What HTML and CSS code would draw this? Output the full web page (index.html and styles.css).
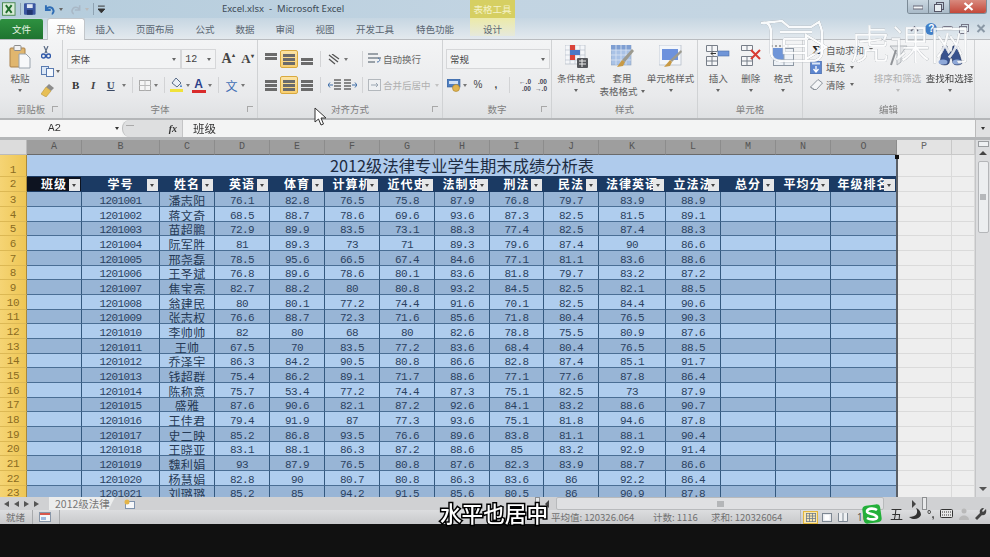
FILE: index.html
```html
<!DOCTYPE html>
<html lang="zh-CN">
<head>
    <meta charset="UTF-8">
    <title>Excel.xlsx - Microsoft Excel</title>
    <link rel="stylesheet" href="styles.css">
</head>
<body>

<div class="app">

    <!-- Title bar -->
    <div class="titlebar">
        <div class="qat">
            <svg width="14" height="14" viewBox="0 0 14 14"><rect x="0.5" y="0.5" width="13" height="13" fill="#d8ecd8" stroke="#4d8a55"/><path d="M4 3l6 8M10 3l-6 8" stroke="#1f6e2c" stroke-width="2"/></svg>
            <span class="qat-sep"></span>
            <svg width="12" height="12" viewBox="0 0 12 12"><rect width="12" height="12" rx="1" fill="#3a55a0"/><rect x="3" y="1" width="6" height="4" fill="#dfe6f5"/><rect x="3" y="7" width="6" height="5" fill="#223570"/></svg>
            <svg class="qat-gap" width="11" height="11" viewBox="0 0 11 11"><path d="M2 1v5h5M2 6c2-4 7-4 8 1 0 1-1 3-2 3" fill="none" stroke="#2f6db5" stroke-width="2"/></svg>
            <i class="mini-arrow"></i>
            <svg class="qat-gap" width="11" height="11" viewBox="0 0 11 11"><path d="M9 1v5H4M9 6C7 2 2 2 1 7c0 1 1 3 2 3" fill="none" stroke="#a9b8c6" stroke-width="1.6"/></svg>
            <i class="mini-arrow faded"></i>
            <span class="qat-sep"></span>
            <svg width="7" height="8" viewBox="0 0 7 8"><path d="M0 1h7M0 4h7l-3.5 4z" stroke="#333" fill="#333"/></svg>
        </div>
        <div class="doc-title">Excel.xlsx&nbsp; -&nbsp; Microsoft Excel</div>
        <div class="ctx-title">表格工具</div>
        <div class="win-btns">
            <span class="win-btn"><svg width="10" height="6" viewBox="0 0 10 6"><rect y="2" width="10" height="3" fill="#f3f6f8" stroke="#667"/></svg></span>
            <span class="win-btn"><svg width="10" height="10" viewBox="0 0 10 10"><rect x="2.5" y="0.5" width="7" height="7" fill="none" stroke="#556"/><rect x="0.5" y="2.5" width="7" height="7" fill="#e8eef2" stroke="#556"/></svg></span>
            <span class="win-btn close"><svg width="11" height="9" viewBox="0 0 11 9"><path d="M1.5 1l8 7M9.5 1l-8 7" stroke="#fff" stroke-width="2.2"/></svg></span>
        </div>
    </div>

    <!-- Ribbon tabs -->
    <div class="tabs">
        <div class="tab-file">文件</div>
        <div class="tab active">开始</div>
        <div class="tab">插入</div>
        <div class="tab wide">页面布局</div>
        <div class="tab">公式</div>
        <div class="tab">数据</div>
        <div class="tab">审阅</div>
        <div class="tab">视图</div>
        <div class="tab wide">开发工具</div>
        <div class="tab wide">特色功能</div>
        <div class="tab ctx">设计</div>
        <div class="tab-tools">
            <span class="tab-tool"><svg width="9" height="6" viewBox="0 0 9 6"><path d="M1 5l3.5-4L8 5" fill="none" stroke="#667" stroke-width="1.6"/></svg></span>
            <span class="tab-tool"><span class="help">?</span></span>
            <span class="tab-tool"><svg width="11" height="5" viewBox="0 0 11 5"><rect x="0.5" y="0.5" width="10" height="3" rx="1" fill="#f4f6f8" stroke="#778"/></svg></span>
            <span class="tab-tool"><svg width="10" height="10" viewBox="0 0 10 10"><rect x="2.5" y="0.5" width="7" height="7" fill="none" stroke="#778"/><rect x="0.5" y="2.5" width="7" height="7" fill="#e8eef2" stroke="#778"/></svg></span>
            <span class="tab-tool"><svg width="10" height="9" viewBox="0 0 10 9"><path d="M1.5 1l7 7M8.5 1l-7 7" stroke="#8a98a6" stroke-width="2"/></svg></span>
        </div>
    </div>

    <!-- Ribbon -->
    <div class="ribbon">

        <div class="group g-clip">
            <div class="group-body">
                <div class="big-btn paste">
                    <div class="big-icon">
                        <svg width="22" height="24" viewBox="0 0 22 24"><rect x="1" y="3" width="15" height="19" rx="1" fill="#e0b66e" stroke="#a9814a"/><rect x="5" y="0.5" width="7" height="5" rx="1" fill="#f1f1f1" stroke="#8d8d8d"/><path d="M10 9h7l4 4v10H10z" fill="#f7f8fa" stroke="#9aa4ae"/></svg>
                    </div>
                    <div class="big-text">粘贴</div>
                    <i class="mini-arrow"></i>
                </div>
                <div class="clip-tools">
                    <svg width="10" height="13" viewBox="0 0 10 13"><path d="M3 0l3 7M7 0L4 7" stroke="#5a6b85" stroke-width="1.2"/><circle cx="2.5" cy="10" r="2" fill="none" stroke="#2f58a8" stroke-width="1.4"/><circle cx="7.5" cy="10" r="2" fill="none" stroke="#2f58a8" stroke-width="1.4"/></svg>
                    <span class="clip-row"><svg width="13" height="11" viewBox="0 0 13 11"><rect x="0.5" y="0.5" width="7" height="8" fill="#dbe7f6" stroke="#5a7bb0"/><rect x="5.5" y="2.5" width="7" height="8" fill="#f4f8fd" stroke="#5a7bb0"/></svg><i class="mini-arrow"></i></span>
                    <svg width="13" height="13" viewBox="0 0 13 13"><path d="M8 0l5 4-3 3-5-4z" fill="#8c8c8c"/><path d="M5 3l5 4-5 6-5-3z" fill="#e7bf55" stroke="#b08a2f" stroke-width="0.5"/></svg>
                </div>
            </div>
            <div class="group-label"><span></span><span>剪贴板</span><i class="launcher"></i></div>
        </div>

        <div class="group g-font">
            <div class="group-body column">
                <div class="tool-row">
                    <div class="select font-name"><span>宋体</span><i class="mini-arrow"></i></div>
                    <div class="select font-size"><span>12</span><i class="mini-arrow"></i></div>
                    <span class="grow-a big">A<sup>▴</sup></span>
                    <span class="grow-a">A<sup>▾</sup></span>
                </div>
                <div class="tool-row second">
                    <span class="tool fmt bold">B</span>
                    <span class="tool fmt italic">I</span>
                    <span class="tool fmt under">U</span>
                    <i class="drop"></i>
                    <span class="sep"></span>
                    <span class="tool narrow"><svg width="12" height="11" viewBox="0 0 12 11"><rect x="0.5" y="0.5" width="11" height="10" fill="#f5f5f5" stroke="#aaa"/><path d="M6 0v11M0 5.5h12" stroke="#bbb"/></svg></span>
                    <i class="drop"></i>
                    <span class="sep"></span>
                    <span class="tool narrow"><svg width="13" height="14" viewBox="0 0 13 14"><path d="M6 0l5 5-4 4-5-4z" fill="#e9eef5" stroke="#5a6c88"/><path d="M11 6l1 3h-2z" fill="#3f78c2"/><rect y="11" width="13" height="3" fill="#f0e23a"/></svg></span>
                    <i class="drop"></i>
                    <span class="tool narrow font-color">A</span>
                    <i class="drop"></i>
                    <span class="sep"></span>
                    <span class="tool narrow wen">文</span>
                    <i class="drop"></i>
                </div>
            </div>
            <div class="group-label"><span></span><span>字体</span><i class="launcher"></i></div>
        </div>

        <div class="group g-align">
            <div class="group-body column">
                <div class="tool-row">
                    <span class="tool al"><span class="bars up"><b></b><b></b></span></span>
                    <span class="tool al on"><span class="bars"><b></b><b></b><b></b></span></span>
                    <span class="tool al"><span class="bars down"><b></b><b></b></span></span>
                    <span class="sep"></span>
                    <span class="tool orient"><svg width="12" height="11" viewBox="0 0 12 11"><path d="M1 1l9 7M1 5l6 5M4 0l7 5" stroke="#555" stroke-width="1.3"/></svg></span>
                    <i class="drop"></i>
                    <span class="sep far"></span>
                    <span class="tool-text"><svg width="13" height="12" viewBox="0 0 13 12"><path d="M0 1h10M0 5h13M0 9h7" stroke="#7d8790" stroke-width="1.6"/><path d="M10 5c3 1 2 4-1 4" fill="none" stroke="#4b74aa"/></svg>自动换行</span>
                </div>
                <div class="tool-row second">
                    <span class="tool al"><span class="bars"><b></b><b></b><b></b></span></span>
                    <span class="tool al on"><span class="bars"><b></b><b></b><b></b></span></span>
                    <span class="tool al"><span class="bars"><b></b><b></b><b></b></span></span>
                    <span class="sep"></span>
                    <span class="tool indent"><svg width="13" height="12" viewBox="0 0 13 12"><path d="M6 1h7M6 4h7M6 7h7M6 10h7" stroke="#666" stroke-width="1.3"/><path d="M5 6H0M2 3.5L0 6l2 2.5" fill="none" stroke="#3f6ea8"/></svg></span>
                    <span class="tool indent"><svg width="13" height="12" viewBox="0 0 13 12"><path d="M0 1h7M0 4h7M0 7h7M0 10h7" stroke="#666" stroke-width="1.3"/><path d="M8 6h5M11 3.5L13 6l-2 2.5" fill="none" stroke="#3f6ea8"/></svg></span>
                    <span class="sep merge-sep"></span>
                    <span class="tool-text faded"><svg width="13" height="12" viewBox="0 0 13 12"><rect x="0.5" y="0.5" width="12" height="11" fill="#eef0f2" stroke="#b3b8bd"/><path d="M3 6h7M8 4l2 2-2 2" fill="none" stroke="#9aa6b2"/></svg>合并后居中</span>
                    <i class="drop faint"></i>
                </div>
            </div>
            <div class="group-label"><span></span><span>对齐方式</span><i class="launcher"></i></div>
        </div>

        <div class="group g-num">
            <div class="group-body column">
                <div class="tool-row">
                    <div class="select num-format"><span>常规</span><i class="mini-arrow"></i></div>
                </div>
                <div class="tool-row second">
                    <span class="tool narrow"><svg width="14" height="13" viewBox="0 0 14 13"><rect width="13" height="8" fill="#4f7fc0" stroke="#34588f" stroke-width="0.6"/><rect x="2" y="2" width="9" height="3" fill="#cfe0f5"/><circle cx="9" cy="9" r="3.5" fill="#e0b44e" stroke="#a87f2a" stroke-width="0.6"/></svg></span>
                    <i class="drop"></i>
                    <span class="tool num-sym">%</span>
                    <span class="tool num-sym comma">,</span>
                    <span class="sep"></span>
                    <span class="tool dec"><span>←.0</span><span>.00</span></span>
                    <span class="tool dec"><span>.00</span><span>→.0</span></span>
                </div>
            </div>
            <div class="group-label"><span></span><span>数字</span><i class="launcher"></i></div>
        </div>

        <div class="group g-style">
            <div class="group-body">
                <div class="big-btn cond">
                    <div class="big-icon">
                        <svg width="23" height="23" viewBox="0 0 23 23"><rect width="20" height="19" fill="#f4f6f9" stroke="#a9b2bd" stroke-width="0.6"/><path d="M5 0v19M10 0v19M15 0v19M0 5h20M0 10h20M0 15h20" stroke="#b9c2cd" stroke-width="0.7"/><rect x="5" width="5" height="5" fill="#d9433a"/><rect x="5" y="5" width="10" height="5" fill="#4a78c8"/><rect x="5" y="10" width="5" height="5" fill="#d9433a"/><rect x="12" y="13" width="11" height="10" rx="1" fill="#56585c"/><path d="M14 16h7M14 19h7M17 14v8" stroke="#eee"/></svg>
                    </div>
                    <div class="big-text">条件格式</div>
                    <i class="mini-arrow"></i>
                </div>
                <div class="big-btn table-fmt">
                    <div class="big-icon">
                        <svg width="23" height="23" viewBox="0 0 23 23"><rect width="20" height="20" fill="#a9c2e6" stroke="#8ea2bd" stroke-width="0.6"/><rect width="20" height="5" fill="#7f9fd2"/><path d="M5 0v20M10 0v20M15 0v20M0 5h20M0 10h20M0 15h20" stroke="#dbe5f3" stroke-width="0.8"/><path d="M21 4l2 2-9 11-3-2z" fill="#9c9a8f"/><path d="M11 15l3 2-2 4-6 1z" fill="#c89a45"/></svg>
                    </div>
                    <div class="big-text">套用<br>表格格式<i class="mini-arrow inline"></i></div>
                </div>
                <div class="big-btn cell-style">
                    <div class="big-icon">
                        <svg width="23" height="23" viewBox="0 0 23 23"><rect width="22" height="20" fill="#f3f6fa" stroke="#a4afbc" stroke-width="0.6"/><rect x="3" y="4" width="16" height="11" fill="#6d92dd"/><path d="M22 5l1 2-10 10-2-2z" fill="#9c9a8f"/><path d="M11 15l2 2-2 4-6 1z" fill="#c89a45"/></svg>
                    </div>
                    <div class="big-text">单元格样式</div>
                    <i class="mini-arrow"></i>
                </div>
            </div>
            <div class="group-label"><span></span><span>样式</span><span></span></div>
        </div>

        <div class="group g-cell">
            <div class="group-body">
                <div class="big-btn cell-btn">
                    <div class="big-icon">
                        <svg width="24" height="21" viewBox="0 0 24 21"><path d="M0.5 0.5h11v6h-11zM6 0.5v6M0.5 11.5h11v9h-11zM6 11.5v9M0.5 16h11" fill="#f5f6f8" stroke="#777e88"/><rect x="12" y="6" width="11" height="5" fill="#6f95d8" stroke="#4a6ea8" stroke-width="0.6"/><path d="M10 8.5H5M7 6.5l-2 2 2 2" fill="none" stroke="#333"/></svg>
                    </div>
                    <div class="big-text">插入</div>
                    <i class="mini-arrow"></i>
                </div>
                <div class="big-btn cell-btn">
                    <div class="big-icon">
                        <svg width="20" height="21" viewBox="0 0 20 21"><path d="M0.5 0.5h11v5h-11zM6 0.5v5M0.5 11.5h11v9h-11zM6 11.5v9M0.5 16h11" fill="#f5f6f8" stroke="#777e88"/><path d="M10 5l9 9M19 5l-9 9" stroke="#d93a32" stroke-width="2"/></svg>
                    </div>
                    <div class="big-text">删除</div>
                    <i class="mini-arrow"></i>
                </div>
                <div class="big-btn cell-btn">
                    <div class="big-icon">
                        <svg width="24" height="21" viewBox="0 0 24 21"><rect x="2.5" y="3.5" width="20" height="17" fill="#eef2f7" stroke="#8d97a3"/><rect x="2" y="3" width="11" height="12" fill="#6f95d8"/><path d="M13 3v17M2 15h20" stroke="#9aa5b2"/><path d="M0 1h20" stroke="#555" stroke-dasharray="2 2"/></svg>
                    </div>
                    <div class="big-text">格式</div>
                    <i class="mini-arrow"></i>
                </div>
            </div>
            <div class="group-label"><span></span><span>单元格</span><span></span></div>
        </div>

        <div class="group g-edit">
            <div class="group-body">
                <div class="edit-list">
                    <div class="edit-row"><span class="sigma">Σ</span>自动求和<i class="mini-arrow"></i></div>
                    <div class="edit-row"><svg width="12" height="13" viewBox="0 0 12 13"><rect width="11" height="13" fill="#5d86cf" stroke="#3c5f9e" stroke-width="0.6"/><rect x="1.5" y="1.5" width="8" height="2" fill="#dbe6f6"/><path d="M5.5 5v5M3 8l2.5 3L8 8" fill="none" stroke="#fff" stroke-width="1.3"/></svg>填充<i class="mini-arrow"></i></div>
                    <div class="edit-row"><svg width="13" height="11" viewBox="0 0 13 11"><path d="M8 0.5l4.5 3.5-6 6.5H3L0.5 8z" fill="#f3f5f7" stroke="#8d949c"/><path d="M0.5 8l4 2.5" stroke="#8d949c"/></svg>清除<i class="mini-arrow"></i></div>
                </div>
                <div class="big-btn sort">
                    <div class="big-icon">
                        <svg width="22" height="21" viewBox="0 0 22 21"><path d="M3 1h17l-6 8v8l-4 3v-11z" fill="#e4e6e8" stroke="#b0b4b9"/><path d="M4 20L9 5" stroke="#8f9296" stroke-width="2"/></svg>
                    </div>
                    <div class="big-text">排序和筛选</div>
                    <i class="mini-arrow faded"></i>
                </div>
                <div class="big-btn find">
                    <div class="big-icon">
                        <svg width="26" height="21" viewBox="0 0 26 21"><path d="M6 1h4l1 6h4l1-6h4l5 17c0 2-8 3-9 0l-1-5h-2l-1 5c-1 3-9 2-9 0z" fill="#38528d" stroke="#1f2f58" stroke-width="0.6"/><ellipse cx="6" cy="17" rx="4.5" ry="2.5" fill="#8ea8d8"/><ellipse cx="20" cy="17" rx="4.5" ry="2.5" fill="#8ea8d8"/><path d="M7 2h2M17 2h2" stroke="#c6d3ea"/></svg>
                    </div>
                    <div class="big-text dark">查找和选择</div>
                    <i class="mini-arrow"></i>
                </div>
            </div>
            <div class="group-label"><span></span><span>编辑</span><span></span></div>
        </div>
    </div>

    <!-- Formula bar -->
    <div class="formula-wrap">
        <div class="formula-bar">
            <div class="name-box"><span>A2</span><i class="mini-arrow dark"></i></div>
            <div class="fx-box"><span class="fx-knob"></span><span class="fx">fx</span></div>
            <div class="formula-input">班级</div>
            <div class="formula-expand"><i class="mini-arrow dark"></i></div>
        </div>
    </div>

    <!-- Sheet -->
    <div class="sheet-row">
        <div class="sheet">
            <table class="grid">
                <colgroup>
                    <col class="c-head"><col class="c55"><col class="c78"><col class="c55"><col class="c55"><col class="c55"><col class="c55"><col class="c55"><col class="c55"><col class="c54"><col class="c55"><col class="c67"><col class="c55"><col class="c55"><col class="c55"><col class="c66"><col class="c55"><col class="c23">
                </colgroup>
                <thead>
                    <tr><th class="corner"></th><th>A</th><th>B</th><th>C</th><th>D</th><th>E</th><th>F</th><th>G</th><th>H</th><th>I</th><th>J</th><th>K</th><th>L</th><th>M</th><th>N</th><th>O</th><th class="off">P</th><th class="off"></th></tr>
                </thead>
                <tbody>
                    <tr class="title-row"><th>1</th><td colspan="15" class="sheet-title">2012级法律专业学生期末成绩分析表</td><td></td><td></td></tr>
                    <tr class="head-row"><th>2</th>
                        <td class="hd active-cell"><span>班级</span><i class="filter"></i></td>
                        <td class="hd"><span>学号</span><i class="filter"></i></td>
                        <td class="hd"><span>姓名</span><i class="filter"></i></td>
                        <td class="hd"><span>英语</span><i class="filter"></i></td>
                        <td class="hd"><span>体育</span><i class="filter"></i></td>
                        <td class="hd"><span>计算机</span><i class="filter"></i></td>
                        <td class="hd"><span>近代史</span><i class="filter"></i></td>
                        <td class="hd"><span>法制史</span><i class="filter"></i></td>
                        <td class="hd"><span>刑法</span><i class="filter"></i></td>
                        <td class="hd"><span>民法</span><i class="filter"></i></td>
                        <td class="hd"><span>法律英语</span><i class="filter"></i></td>
                        <td class="hd"><span>立法法</span><i class="filter"></i></td>
                        <td class="hd"><span>总分</span><i class="filter"></i></td>
                        <td class="hd"><span>平均分</span><i class="filter"></i></td>
                        <td class="hd"><span>年级排名</span><i class="filter"></i></td>
                        <td></td><td></td>
                    </tr>
                    <tr><th>3</th><td></td><td>1201001</td><td>潘志阳</td><td>76.1</td><td>82.8</td><td>76.5</td><td>75.8</td><td>87.9</td><td>76.8</td><td>79.7</td><td>83.9</td><td>88.9</td><td></td><td></td><td></td><td></td><td></td></tr>
                    <tr><th>4</th><td></td><td>1201002</td><td>蒋文奇</td><td>68.5</td><td>88.7</td><td>78.6</td><td>69.6</td><td>93.6</td><td>87.3</td><td>82.5</td><td>81.5</td><td>89.1</td><td></td><td></td><td></td><td></td><td></td></tr>
                    <tr><th>5</th><td></td><td>1201003</td><td>苗超鹏</td><td>72.9</td><td>89.9</td><td>83.5</td><td>73.1</td><td>88.3</td><td>77.4</td><td>82.5</td><td>87.4</td><td>88.3</td><td></td><td></td><td></td><td></td><td></td></tr>
                    <tr><th>6</th><td></td><td>1201004</td><td>阮军胜</td><td>81</td><td>89.3</td><td>73</td><td>71</td><td>89.3</td><td>79.6</td><td>87.4</td><td>90</td><td>86.6</td><td></td><td></td><td></td><td></td><td></td></tr>
                    <tr><th>7</th><td></td><td>1201005</td><td>邢尧磊</td><td>78.5</td><td>95.6</td><td>66.5</td><td>67.4</td><td>84.6</td><td>77.1</td><td>81.1</td><td>83.6</td><td>88.6</td><td></td><td></td><td></td><td></td><td></td></tr>
                    <tr><th>8</th><td></td><td>1201006</td><td>王圣斌</td><td>76.8</td><td>89.6</td><td>78.6</td><td>80.1</td><td>83.6</td><td>81.8</td><td>79.7</td><td>83.2</td><td>87.2</td><td></td><td></td><td></td><td></td><td></td></tr>
                    <tr><th>9</th><td></td><td>1201007</td><td>焦宝亮</td><td>82.7</td><td>88.2</td><td>80</td><td>80.8</td><td>93.2</td><td>84.5</td><td>82.5</td><td>82.1</td><td>88.5</td><td></td><td></td><td></td><td></td><td></td></tr>
                    <tr><th>10</th><td></td><td>1201008</td><td>翁建民</td><td>80</td><td>80.1</td><td>77.2</td><td>74.4</td><td>91.6</td><td>70.1</td><td>82.5</td><td>84.4</td><td>90.6</td><td></td><td></td><td></td><td></td><td></td></tr>
                    <tr><th>11</th><td></td><td>1201009</td><td>张志权</td><td>76.6</td><td>88.7</td><td>72.3</td><td>71.6</td><td>85.6</td><td>71.8</td><td>80.4</td><td>76.5</td><td>90.3</td><td></td><td></td><td></td><td></td><td></td></tr>
                    <tr><th>12</th><td></td><td>1201010</td><td>李帅帅</td><td>82</td><td>80</td><td>68</td><td>80</td><td>82.6</td><td>78.8</td><td>75.5</td><td>80.9</td><td>87.6</td><td></td><td></td><td></td><td></td><td></td></tr>
                    <tr><th>13</th><td></td><td>1201011</td><td>王帅</td><td>67.5</td><td>70</td><td>83.5</td><td>77.2</td><td>83.6</td><td>68.4</td><td>80.4</td><td>76.5</td><td>88.5</td><td></td><td></td><td></td><td></td><td></td></tr>
                    <tr><th>14</th><td></td><td>1201012</td><td>乔泽宇</td><td>86.3</td><td>84.2</td><td>90.5</td><td>80.8</td><td>86.6</td><td>82.8</td><td>87.4</td><td>85.1</td><td>91.7</td><td></td><td></td><td></td><td></td><td></td></tr>
                    <tr><th>15</th><td></td><td>1201013</td><td>钱超群</td><td>75.4</td><td>86.2</td><td>89.1</td><td>71.7</td><td>88.6</td><td>77.1</td><td>77.6</td><td>87.8</td><td>86.4</td><td></td><td></td><td></td><td></td><td></td></tr>
                    <tr><th>16</th><td></td><td>1201014</td><td>陈称意</td><td>75.7</td><td>53.4</td><td>77.2</td><td>74.4</td><td>87.3</td><td>75.1</td><td>82.5</td><td>73</td><td>87.9</td><td></td><td></td><td></td><td></td><td></td></tr>
                    <tr><th>17</th><td></td><td>1201015</td><td>盛雅</td><td>87.6</td><td>90.6</td><td>82.1</td><td>87.2</td><td>92.6</td><td>84.1</td><td>83.2</td><td>88.6</td><td>90.7</td><td></td><td></td><td></td><td></td><td></td></tr>
                    <tr><th>18</th><td></td><td>1201016</td><td>王佳君</td><td>79.4</td><td>91.9</td><td>87</td><td>77.3</td><td>93.6</td><td>75.1</td><td>81.8</td><td>94.6</td><td>87.8</td><td></td><td></td><td></td><td></td><td></td></tr>
                    <tr><th>19</th><td></td><td>1201017</td><td>史二映</td><td>85.2</td><td>86.8</td><td>93.5</td><td>76.6</td><td>89.6</td><td>83.8</td><td>81.1</td><td>88.1</td><td>90.4</td><td></td><td></td><td></td><td></td><td></td></tr>
                    <tr><th>20</th><td></td><td>1201018</td><td>王晓亚</td><td>83.1</td><td>88.1</td><td>86.3</td><td>87.2</td><td>88.6</td><td>85</td><td>83.2</td><td>92.9</td><td>91.4</td><td></td><td></td><td></td><td></td><td></td></tr>
                    <tr><th>21</th><td></td><td>1201019</td><td>魏利娟</td><td>93</td><td>87.9</td><td>76.5</td><td>80.8</td><td>87.6</td><td>82.3</td><td>83.9</td><td>88.7</td><td>86.6</td><td></td><td></td><td></td><td></td><td></td></tr>
                    <tr><th>22</th><td></td><td>1201020</td><td>杨慧娟</td><td>82.8</td><td>90</td><td>80.7</td><td>80.8</td><td>86.3</td><td>83.6</td><td>86</td><td>92.2</td><td>86.4</td><td></td><td></td><td></td><td></td><td></td></tr>
                    <tr><th>23</th><td></td><td>1201021</td><td>刘璐璐</td><td>85.2</td><td>85</td><td>94.2</td><td>91.5</td><td>85.6</td><td>80.5</td><td>86</td><td>90.9</td><td>87.8</td><td></td><td></td><td></td><td></td><td></td></tr>
                </tbody>
            </table>
            <!-- Selection edge, sits over the grid -->
            <div class="selection-edge"><i></i></div>
        </div>
        <div class="vscroll">
            <div class="split-box"></div>
            <div class="arrow-up"></div>
            <div class="vthumb"><i></i></div>
            <div class="scroll-space"></div>
            <div class="arrow-down"></div>
        </div>
    </div>

    <!-- Sheet tabs and horizontal scrollbar -->
    <div class="sheet-tabs">
        <div class="tab-nav">
            <i class="nav first"></i><i class="nav prev"></i><i class="nav next"></i><i class="nav last"></i>
        </div>
        <div class="sheet-tab">2012级法律</div>
        <div class="new-tab"><svg width="12" height="10" viewBox="0 0 12 10"><rect x="1.5" y="2.5" width="9" height="7" fill="#f7f8fa" stroke="#7f93ad"/><circle cx="3" cy="3" r="2.5" fill="#e3b448"/></svg></div>
        <div class="tabs-space"></div>
        <div class="hsplit"></div>
        <div class="harrow left"></div>
        <div class="hthumb"><i></i></div>
        <div class="hrest"><span class="harrow right"></span><span class="hsplit end"></span></div>
    </div>

    <!-- Status bar -->
    <div class="statusbar">
        <div class="status-ready">就绪</div>
        <div class="status-macro"><svg width="12" height="10" viewBox="0 0 12 10"><rect x="0.5" y="0.5" width="11" height="9" fill="#f4f6f8" stroke="#8896a8"/><rect x="1" y="1" width="10" height="2" fill="#d8574c"/><rect x="2" y="5" width="5" height="3" fill="#9db9df"/></svg></div>
        <div class="status-space"></div>
        <div class="stat stat-avg">平均值: 120326.064</div>
        <div class="stat stat-count">计数: 1116</div>
        <div class="stat stat-sum">求和: 120326064</div>
        <div class="views">
            <span class="view on"><svg width="10" height="9" viewBox="0 0 10 9"><path d="M0 .5h10M0 3h10M0 5.5h10M0 8.5h10M.5 0v9M3.5 0v9M6.5 0v9M9.5 0v9" stroke="#6d7b8c" stroke-width="0.8"/></svg></span>
            <span class="view"><svg width="10" height="9" viewBox="0 0 10 9"><rect x="0.5" y="0.5" width="9" height="8" fill="#e9ebee" stroke="#7d8792"/><rect x="2.5" y="2" width="5" height="5" fill="#fff"/></svg></span>
            <span class="view"><svg width="10" height="9" viewBox="0 0 10 9"><path d="M.5 0v8.5h9V0M5 0v8.5" fill="#eef0f2" stroke="#7d8792"/></svg></span>
            <span class="zoom-val">10</span>
        </div>
    </div>

    <div class="black-band"></div>

    <!-- Overlays: watermark, cursor, subtitle, input method -->
    <div class="watermark">
        <svg width="72" height="46" viewBox="0 0 72 46" fill="none" stroke="#fff" stroke-width="2.6"><path d="M1 4c7-2 10 3 10 9v20c0 6 5 9 11 9h30c6 0 10-4 10-9V14c0-5-2-8-3-11l-8 5H29l-7-6z"/><path d="M20 13h32M24 20h24M24 27h22M24 20v14h22"/><path d="M46 16l20 12-20 12z"/></svg>
        <span class="wm-text">虎课网</span>
    </div>
    <svg class="cursor" width="13" height="19" viewBox="0 0 13 19"><path d="M1 1v14l3.5-3 2.5 6 2.5-1-2.5-6h5z" fill="#fff" stroke="#333"/></svg>
    <div class="subtitle">水平也居中</div>
    <div class="ime">
        <svg class="ime-logo" width="20" height="20" viewBox="0 0 20 20"><rect x="1" y="1" width="18" height="18" rx="4" fill="#23b03a" transform="rotate(-8 10 10)"/><path d="M15 6c-3-2-9-2-10 1s9 3 10 6-7 3-10 1" fill="none" stroke="#fff" stroke-width="2.6"/></svg>
        <span class="ime-wu">五</span>
        <svg width="12" height="12" viewBox="0 0 12 12"><path d="M7 0c3 5 0 9-7 9 3 3 10 3 12-2C12 4 10 1 7 0z" fill="#333"/></svg>
        <span class="ime-dot">°,</span>
        <svg width="13" height="9" viewBox="0 0 13 9"><rect x="0.5" y="0.5" width="12" height="8" rx="1" fill="#e8e8e8" stroke="#333"/><path d="M2 3h9M2 6h9" stroke="#333" stroke-dasharray="1 1"/></svg>
        <svg width="10" height="12" viewBox="0 0 10 12"><circle cx="5" cy="3" r="2.5" fill="#b9b9b9"/><path d="M0 12c0-6 10-6 10 0z" fill="#b9b9b9"/></svg>
        <svg width="12" height="12" viewBox="0 0 12 12"><path d="M11 1L8 4 7 3l2-3C6 0 4 2 5 5L0 10l2 2 5-5c3 1 5-2 4-6z" fill="#444"/></svg>
    </div>
</div>

</body>
</html>
```

FILE: styles.css
```css
* {
    box-sizing: border-box;
}

body {
    margin: 0;
    background: #111;
    font-family: "Noto Sans CJK SC", "Noto Sans", sans-serif;
    font-size: 9.5px;
    color: #666;
}

.app {
    position: relative;
    width: 990px;
    height: 557px;
    overflow: hidden;
    display: flex;
    flex-direction: column;
    filter: blur(0.5px);
}

i {
    display: block;
}

/* Small dropdown arrow used everywhere */
.mini-arrow {
    width: 0;
    height: 0;
    border-left: 2.5px solid transparent;
    border-right: 2.5px solid transparent;
    border-top: 3px solid #666;
    flex: none;
}

.mini-arrow.dark {
    border-top-color: #333;
}

.mini-arrow.faded {
    border-top-color: #bbb;
}

.mini-arrow.inline {
    display: inline-block;
    margin-left: 3px;
    vertical-align: 2px;
}

/* Title bar */
.titlebar {
    height: 18px;
    display: flex;
    align-items: flex-start;
    background: linear-gradient(90deg, #b4ccdc, #c2d4e2 50%, #c6d6e2);
}

.qat {
    width: 105px;
    height: 18px;
    padding-left: 2px;
    display: flex;
    align-items: center;
    gap: 4px;
}

.qat-sep {
    width: 1px;
    height: 12px;
    background: #8fa3b3;
}

.qat-gap {
    margin-left: 4px;
}

.doc-title {
    width: 365px;
    padding-left: 117px;
    line-height: 18px;
    font-size: 9.5px;
    font-family: "Noto Sans", sans-serif;
    color: #3d4a56;
    white-space: nowrap;
}

.ctx-title {
    width: 45px;
    height: 18px;
    line-height: 18px;
    text-align: center;
    color: #f4f2c8;
    background: #d6cf62;
}

.win-btns {
    margin-left: auto;
    margin-right: 3px;
    width: 80px;
    height: 14px;
    display: flex;
    border: 1px solid #7b8a96;
    border-top: 0;
    border-radius: 0 0 3px 3px;
    overflow: hidden;
}

.win-btn {
    width: 21px;
    display: flex;
    align-items: center;
    justify-content: center;
    background: linear-gradient(#cbd8e2, #a9bac8);
    border-right: 1px solid #7b8a96;
}

.win-btn.close {
    flex: 1;
    border: 0;
    background: linear-gradient(#d88a7e, #c4483a);
}

/* Ribbon tabs */
.tabs {
    height: 22px;
    display: flex;
    background: linear-gradient(#c6d6e2, #e3e9ee);
    border-bottom: 1px solid #b9bcc0;
    color: #5a6672;
}

.tab-file {
    width: 43px;
    margin-top: 1px;
    line-height: 20px;
    text-align: center;
    color: #e8f5e6;
    border-radius: 2px 2px 0 0;
    background: linear-gradient(#2e9140, #1f7430);
}

.tab {
    width: 40px;
    line-height: 22px;
    text-align: center;
}

.tab.wide {
    width: 60px;
}

.tab.active {
    width: 38px;
    margin-left: 4px;
    height: 22px;
    background: linear-gradient(#fff, #f4f5f6);
    border: 1px solid #c2c6ca;
    border-bottom: 0;
    border-radius: 3px 3px 0 0;
    line-height: 20px;
    color: #777;
}

.tab.ctx {
    width: 45px;
    margin-left: 5px;
    height: 18px;
    line-height: 22px;
    background: linear-gradient(#eceaa8, #e6e9dc);
}

.tab-tools {
    margin-left: auto;
    display: flex;
    align-items: center;
    padding-right: 1px;
}

.tab-tool {
    width: 16.5px;
    display: flex;
    justify-content: center;
}

.help {
    width: 12px;
    height: 12px;
    border-radius: 50%;
    background: #3f7fc8;
    color: #fff;
    font: 700 10px/12px "Liberation Sans", sans-serif;
    text-align: center;
}

/* Ribbon */
.ribbon {
    height: 78px;
    display: flex;
    background: linear-gradient(#f3f4f5, #e9eaec 70%, #dfe1e3);
}

.group {
    display: flex;
    flex-direction: column;
    border-right: 1px solid #d0d2d4;
}

.g-clip { width: 63px; }
.g-font { width: 195px; }
.g-align { width: 185px; }
.g-num { width: 109px; }
.g-style { width: 146px; }
.g-cell { width: 105px; }
.g-edit { width: 172px; }

.group-body {
    flex: 1;
    display: flex;
}

.group-body.column {
    flex-direction: column;
    padding: 9px 0 0 4px;
}

.group-label {
    height: 16px;
    padding-bottom: 2px;
    display: grid;
    grid-template-columns: 1fr auto 1fr;
    align-items: center;
    line-height: 14px;
    color: #808080;
}

.launcher {
    justify-self: end;
    width: 6px;
    height: 6px;
    margin-right: 4px;
    border: 1px solid #a8a8a8;
    border-width: 1px 0 0 1px;
}

/* Large buttons */
.big-btn {
    display: flex;
    flex-direction: column;
    align-items: center;
    padding-top: 5px;
    color: #5f5f5f;
    white-space: nowrap;
}

.big-icon {
    height: 24px;
    display: flex;
    align-items: flex-start;
    margin-bottom: 3px;
}

.big-text {
    line-height: 13px;
    text-align: center;
    margin-bottom: 4px;
}

.big-text.dark {
    color: #444;
}

.paste {
    width: 36px;
    margin-left: 2px;
}

.clip-tools {
    width: 24px;
    padding: 6px 0 0 3px;
    display: flex;
    flex-direction: column;
    gap: 7px;
    align-items: flex-start;
}

.clip-row {
    display: flex;
    align-items: center;
    gap: 2px;
}

.cond { width: 48px; }
.table-fmt { width: 44px; }
.cell-style { width: 53px; }

.g-cell .group-body {
    padding-left: 4px;
}

.cell-btn {
    width: 32.5px;
}

.edit-list {
    width: 67px;
    padding: 1px 0 0 7px;
    display: flex;
    flex-direction: column;
}

.edit-row {
    height: 17.5px;
    display: flex;
    align-items: center;
    gap: 3px;
    color: #5a5a5a;
    white-space: nowrap;
}

.edit-row .mini-arrow {
    margin-left: 2px;
}

.edit-row svg,
.sigma {
    width: 13px;
    flex: none;
}

.sigma {
    font: 700 12px/14px "Liberation Serif", serif;
    color: #222;
    text-align: center;
}

.sort {
    width: 55px;
    color: #b0b0b0;
}

.find {
    width: 49px;
}

/* Tool rows */
.tool-row {
    height: 20px;
    display: flex;
    align-items: center;
}

.tool-row.second {
    margin-top: 6px;
}

.select {
    height: 20px;
    display: flex;
    align-items: center;
    justify-content: space-between;
    padding: 0 4px 0 3px;
    background: #f2f3f4;
    border: 1px solid #d6d7d9;
    color: #444;
}

.font-name {
    width: 118px;
}

.font-size {
    width: 36px;
    font-family: "Liberation Mono", monospace;
    font-size: 10px;
}

.num-format {
    width: 104px;
    margin-left: -1px;
}

.grow-a {
    width: 20px;
    text-align: center;
    font: 700 13px/20px "Liberation Serif", serif;
    color: #444;
    white-space: nowrap;
}

.grow-a.big {
    margin-left: 2px;
    font-size: 14px;
}

.grow-a sup {
    font-size: 6px;
    line-height: 0;
}

.tool {
    width: 18px;
    height: 18px;
    display: flex;
    align-items: center;
    justify-content: center;
    flex: none;
}

.tool.narrow {
    width: 14px;
}

.fmt {
    width: 17.5px;
    font: 700 11px/18px "Liberation Serif", serif;
    color: #333;
}

.italic {
    font-style: italic;
    color: #444;
}

.under {
    text-decoration: underline;
    color: #3a4a66;
}

.drop {
    width: 8px;
    height: 8px;
    flex: none;
    display: flex;
    align-items: center;
    justify-content: center;
}

.drop::after {
    content: "";
    border-left: 2.5px solid transparent;
    border-right: 2.5px solid transparent;
    border-top: 3px solid #777;
}

.drop.faint::after {
    border-top-color: #c2c2c2;
}

.sep {
    width: 1px;
    height: 16px;
    margin: 0 5px 0 4px;
    background: #d2d3d5;
    flex: none;
}

.sep.far {
    margin-left: 12px;
}

.font-color {
    font: 700 12px/12px "Liberation Sans", sans-serif;
    color: #2b3f8a;
    border-bottom: 3px solid #d92b2b;
    height: 15px;
    align-items: flex-start;
}

.wen {
    font-size: 12px;
    color: #3f6fb5;
    margin-left: 1px;
}

.al {
    width: 18px;
    border: 1px solid transparent;
    border-radius: 2px;
}

.al.on {
    background: linear-gradient(#fbe3a4, #f8cf72);
    border-color: #d9a93e;
}

.bars {
    width: 12px;
    height: 12px;
    display: flex;
    flex-direction: column;
    justify-content: center;
    gap: 1px;
}

.bars.up {
    justify-content: flex-start;
}

.bars.down {
    justify-content: flex-end;
}

.bars b {
    display: block;
    height: 3px;
    background: #6b6b6b;
}

.orient {
    width: 16px;
}

.indent {
    width: 16.5px;
}

.merge-sep {
    margin-left: 3px;
}

.tool-text {
    display: flex;
    align-items: center;
    gap: 2px;
    color: #666;
    white-space: nowrap;
}

.tool-text.faded {
    color: #b0b0b0;
    margin-right: 2px;
}

.num-sym {
    width: 18px;
    font: 10px/18px "Liberation Sans", sans-serif;
    color: #444;
}

.comma {
    font-weight: 700;
}

.dec {
    width: 16px;
    flex-direction: column;
    align-items: flex-end;
    font: 700 6.5px/7px "Liberation Sans", sans-serif;
    color: #445;
}

/* Formula bar */
.formula-wrap {
    height: 22px;
    padding: 2px 0 3px;
    background: #b4b6b8;
}

.formula-bar {
    height: 17px;
    display: flex;
    background: #f3f4f4;
}

.name-box {
    width: 122px;
    display: flex;
    align-items: center;
    justify-content: space-between;
    padding: 0 3px 0 48px;
    background: #f6f6f6;
    font: 11px/17px "Liberation Mono", monospace;
    color: #333;
}

.fx-box {
    width: 61px;
    display: flex;
    align-items: center;
    justify-content: space-between;
    padding-right: 5px;
    background: #dedfe0;
    border-radius: 8px 0 0 8px;
    border-left: 1px solid #bcbdbe;
    border-right: 1px solid #c4c5c6;
}

.fx-knob {
    width: 8px;
    height: 8px;
    margin-left: 3px;
    border-top: 1px solid #aaa;
}

.fx {
    font: italic 700 10px/17px "Liberation Serif", serif;
    color: #333;
}

.formula-input {
    flex: 1;
    padding-left: 10px;
    line-height: 17px;
    font-size: 11.5px;
    color: #333;
}

.formula-expand {
    width: 15px;
    display: flex;
    align-items: center;
    justify-content: center;
    background: #e0e1e2;
    border-left: 1px solid #bbb;
}

/* Sheet */
.sheet-row {
    height: 357px;
    display: flex;
}

.sheet {
    position: relative;
    width: 975px;
    height: 357px;
    overflow: hidden;
    background: #eee;
}

.grid {
    table-layout: fixed;
    width: 975px;
    border-collapse: separate;
    border-spacing: 0;
}

.c-head { width: 27px; }
.c55 { width: 55px; }
.c54 { width: 54px; }
.c78 { width: 78px; }
.c67 { width: 67px; }
.c66 { width: 66px; }
.c23 { width: 23px; }

.grid th,
.grid td {
    padding: 0;
    overflow: hidden;
    white-space: nowrap;
    text-align: center;
    font-weight: 400;
}

.grid thead tr {
    height: 15px;
}

.grid thead th {
    background: #9e9e9e;
    border-right: 1px solid #8c8c8c;
    border-bottom: 1px solid #6a6a6a;
    font: 10px/14px "Liberation Mono", monospace;
    color: #555;
}

.grid thead th.corner {
    background: #dcdcdc;
    border-color: #bbb;
}

.grid thead th.off {
    background: #e3e3e3;
    border-color: #c8c8c8;
    color: #666;
}

/* Rows are 14.67px in the reference: two of 15, one of 14 */
.grid tbody tr {
    height: 15px;
}

.grid tbody tr:nth-child(3n+5) {
    height: 14px;
}

.grid tbody th {
    padding-top: 2px;
    background: linear-gradient(90deg, #f5d474, #eec655);
    border-right: 1px solid #a8893d;
    border-bottom: 1px solid #dcb854;
    font: 11px/11px "Liberation Mono", monospace;
    letter-spacing: -0.3px;
    color: #8b6c22;
}

.grid tbody td {
    padding-top: 3px;
    line-height: 10px;
    font-family: "Liberation Mono", monospace;
    font-size: 11px;
    letter-spacing: -0.6px;
    color: #2a4160;
    background: #afcdee;
    border-right: 1px solid #34597f;
    border-bottom: 1px solid #4a6e94;
}

.grid tbody tr:nth-child(odd) td {
    background: #98b5d6;
}

/* Name column */
.grid tbody td:nth-child(4) {
    padding-top: 2px;
    line-height: 11px;
    font-family: "Noto Sans CJK SC", sans-serif;
    font-size: 12px;
    letter-spacing: 0.3px;
    color: #263a55;
}

/* Columns P and Q sit outside the table */
.grid tbody tr td:nth-child(n+17) {
    background: #eeeeee;
    border-right-color: #dadada;
    border-bottom-color: #dadada;
}

.grid tbody tr.title-row {
    height: 22px;
}

.grid tbody tr.title-row th {
    vertical-align: bottom;
}

.grid tbody tr.title-row td {
    padding: 0;
    background: #afcbec;
}

.grid tbody tr.title-row td:nth-child(n+3) {
    background: #eeeeee;
    border-right-color: #dadada;
    border-bottom-color: #dadada;
}

.grid tbody tr.title-row td.sheet-title {
    font-family: "Noto Sans CJK SC", sans-serif;
    font-size: 16.3px;
    letter-spacing: 0;
    line-height: 21px;
    color: #1d2c42;
    border-right: 0;
    border-bottom-color: #1b3a63;
}

.grid tbody tr.head-row {
    height: 15px;
}

.grid tbody tr.head-row th {
    padding-top: 0;
    line-height: 14px;
}

.grid tbody tr.head-row td {
    padding: 0;
}

.grid tbody tr.head-row td.hd {
    position: relative;
    line-height: 14px;
    background: #1b3a63;
    border-right-color: #1b3a63;
    border-bottom-color: #1b3a63;
    font-family: "Noto Sans CJK SC", sans-serif;
    font-weight: 700;
    font-size: 12px;
    letter-spacing: 1px;
    color: #fff;
}

.grid tbody tr.head-row td:nth-child(n+17) {
    background: #eeeeee;
}

.grid tbody tr.head-row td.active-cell {
    background: #0d1320;
}

.filter {
    position: absolute;
    top: 2px;
    right: 1px;
    width: 11px;
    height: 12px;
    background: #e6e7e8;
}

.filter::after {
    content: "";
    position: absolute;
    left: 3px;
    top: 5px;
    border-left: 2.5px solid transparent;
    border-right: 2.5px solid transparent;
    border-top: 3px solid #444;
}

.selection-edge {
    position: absolute;
    left: 896px;
    top: 15px;
    bottom: 0;
    width: 2px;
    background: #5a5f66;
}

.selection-edge i {
    position: absolute;
    left: -1px;
    top: 0;
    width: 4px;
    height: 4px;
    background: #111;
}

/* Vertical scrollbar */
.vscroll {
    width: 15px;
    display: flex;
    flex-direction: column;
    align-items: center;
    background: #dcdddf;
    border-left: 1px solid #c4c5c7;
}

.split-box {
    width: 11px;
    height: 6px;
    margin-top: 1px;
    background: #eef0f2;
    border: 1px solid #9a9da0;
}

.arrow-up,
.arrow-down {
    width: 0;
    height: 0;
    border-left: 4px solid transparent;
    border-right: 4px solid transparent;
}

.arrow-up {
    margin-top: 4px;
    border-bottom: 4px solid #444;
}

.arrow-down {
    margin-bottom: 6px;
    border-top: 4px solid #555;
}

.vthumb {
    width: 11px;
    height: 72px;
    margin-top: 6px;
    display: flex;
    align-items: center;
    justify-content: center;
    background: #eceef0;
    border: 1px solid #b4b6b9;
    border-radius: 2px;
}

.vthumb i {
    width: 6px;
    height: 6px;
    background: #b5b7ba;
}

.scroll-space {
    flex: 1;
}

/* Sheet tabs */
.sheet-tabs {
    height: 13px;
    display: flex;
    align-items: stretch;
    background: #d0d1d3;
}

.tab-nav {
    width: 49px;
    padding-left: 4px;
    display: flex;
    align-items: center;
    gap: 5px;
}

.nav {
    width: 0;
    height: 0;
    border-top: 3px solid transparent;
    border-bottom: 3px solid transparent;
}

.nav.first,
.nav.prev {
    border-right: 5px solid #555;
}

.nav.next,
.nav.last {
    border-left: 5px solid #555;
}

.sheet-tab {
    width: 66px;
    padding-left: 6px;
    line-height: 13px;
    font-size: 10.5px;
    color: #777;
    background: #eceded;
    clip-path: polygon(0 0, 100% 0, 90% 100%, 0 100%);
}

.new-tab {
    width: 30px;
    padding-left: 9px;
    display: flex;
    align-items: center;
}

.tabs-space {
    width: 390px;
}

.hsplit {
    width: 5px;
    background: #e8e9ea;
    border: 1px solid #8e9092;
}

.harrow {
    width: 0;
    height: 0;
    align-self: center;
    border-top: 4px solid transparent;
    border-bottom: 4px solid transparent;
}

.harrow.left {
    margin: 0 7px 0 5px;
    border-right: 4px solid #444;
}

.hthumb {
    width: 328px;
    display: flex;
    align-items: center;
    justify-content: center;
    background: #dfe0e2;
    border: 1px solid #b8babc;
    border-radius: 2px;
}

.hthumb i {
    width: 7px;
    height: 6px;
    background: #b4b6b8;
}

.hrest {
    flex: 1;
    display: flex;
    align-items: stretch;
    padding-left: 28px;
}

.harrow.right {
    margin-right: 6px;
    border-left: 4px solid #444;
}

.hsplit.end {
    height: 13px;
}

/* Status bar */
.statusbar {
    height: 14px;
    display: flex;
    align-items: center;
    background: linear-gradient(#dcdddf, #c8c9cb);
    color: #707070;
    white-space: nowrap;
}

.status-ready {
    width: 33px;
    padding-left: 6px;
    border-right: 1px solid #a8aaac;
}

.status-macro {
    width: 27px;
    height: 14px;
    padding-left: 6px;
    display: flex;
    align-items: center;
    border-right: 1px solid #a8aaac;
}

.status-space {
    width: 491px;
}

.stat-avg { width: 102px; }
.stat-count { width: 58px; }
.stat-sum { width: 89px; }

.views {
    height: 14px;
    display: flex;
    align-items: center;
    border-left: 1px solid #b4b6b8;
    padding-left: 2px;
}

.view {
    width: 15px;
    height: 13px;
    display: flex;
    align-items: center;
    justify-content: center;
    margin-right: 1px;
}

.view.on {
    background: #f8e6b0;
    border: 1px solid #e2b73e;
}

.zoom-val {
    margin-left: 6px;
    font: 10px/14px "Noto Sans", sans-serif;
    color: #555;
}

.black-band {
    flex: 1;
    background: #111;
}

/* Overlays */
.watermark {
    position: absolute;
    left: 760px;
    top: 19px;
    display: flex;
    align-items: center;
    gap: 18px;
    opacity: 0.85;
    filter: drop-shadow(0 0 0.7px #5d6873);
}

.wm-text {
    font-size: 40px;
    line-height: 46px;
    font-weight: 300;
    white-space: nowrap;
    color: #fff;
    -webkit-text-stroke: 0.6px #fff;
}

.cursor {
    position: absolute;
    left: 314px;
    top: 107px;
}

.subtitle {
    position: absolute;
    left: 440px;
    top: 498px;
    font-size: 21.6px;
    line-height: 30px;
    font-weight: 500;
    color: #fff;
    white-space: nowrap;
    paint-order: stroke fill;
    -webkit-text-stroke: 3px #000;
}

.ime {
    position: absolute;
    left: 862px;
    top: 503px;
    width: 126px;
    height: 21px;
    display: flex;
    align-items: center;
    gap: 6px;
}

.ime-logo {
    margin-right: 2px;
}

.ime-wu {
    font-size: 13px;
    color: #333;
}

.ime-dot {
    font: 700 11px/12px "Liberation Sans", sans-serif;
    color: #444;
}
```
